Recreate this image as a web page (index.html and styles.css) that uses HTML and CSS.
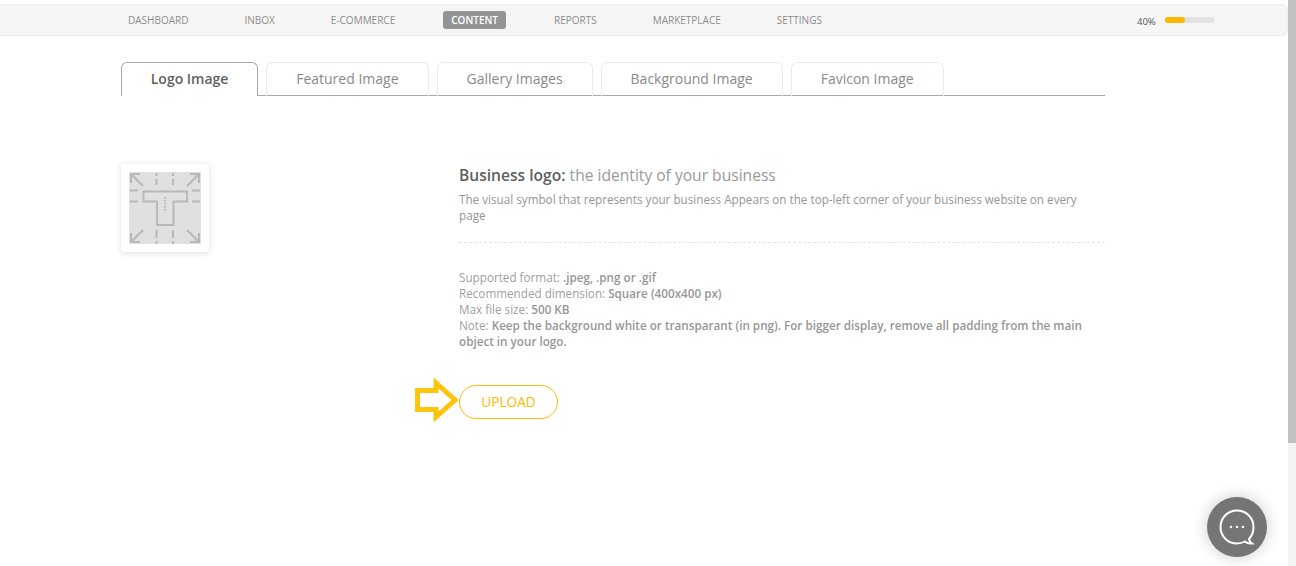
FILE: index.html
```html
<!DOCTYPE html>
<html lang="en">
  <head>
    <meta charset="UTF-8" />
    <meta name="viewport" content="width=device-width, initial-scale=1.0" />
    <title>Logo Image</title>
    <link rel="stylesheet" href="styles.css">
  </head>
  <body>
    <div class="page">
      <div class="topbar">
        <nav class="nav">
          <a class="nav-item">DASHBOARD</a>
          <a class="nav-item">INBOX</a>
          <a class="nav-item">E-COMMERCE</a>
          <a class="nav-item active">CONTENT</a>
          <a class="nav-item">REPORTS</a>
          <a class="nav-item">MARKETPLACE</a>
          <a class="nav-item">SETTINGS</a>
        </nav>
        <div class="progress">
          <span class="progress-label">40%</span>
          <div class="progress-track"><div class="progress-fill" style="width: 40%"></div></div>
        </div>
      </div>

      <div class="content">
        <div class="tabs">
          <a class="tab active">Logo Image</a>
          <a class="tab">Featured Image</a>
          <a class="tab">Gallery Images</a>
          <a class="tab">Background Image</a>
          <a class="tab">Favicon Image</a>
        </div>

        <div class="panel">
          <div class="logo-card">
            <svg class="logo-placeholder" width="72" height="72" viewBox="0 0 72 72">
              <rect width="72" height="72" fill="#e0e0e0" />
              <g fill="none" stroke="#b8b8b8" stroke-width="2">
                <path d="M14.500 19.500H58V29.500H44.500V53H28V29.500H14.500Z" />
                <path d="M2 11V2H11M2 2L14 14" />
                <path d="M70 11V2H61M70 2L58 14" />
                <path d="M2 61V70H11M2 70L14 58" />
                <path d="M70 61V70H61M70 70L58 58" />
                <path d="M1 18.500H9M1 29.500H9M63 18.500H71M63 29.500H71" />
                <path d="M27.500 1V4M27.500 7V13M44 1V4M44 7V13" />
                <path d="M27.500 58V66M27.500 69V72M44 58V66M44 69V72" />
                <path d="M36 25V40" stroke-dasharray="1.500 1.500" />
              </g>
            </svg>
          </div>

          <div class="details">
            <h2 class="details-title"><b>Business logo:</b> the identity of your business</h2>
            <p class="details-desc">The visual symbol that represents your business Appears on the top-left corner of your business website on every page</p>
            <div class="details-divider"></div>
            <p class="details-specs">
              Supported format: <b>.jpeg, .png or .gif</b><br>
              Recommended dimension: <b>Square (400x400 px)</b><br>
              Max file size: <b>500 KB</b><br>
              Note: <b>Keep the background white or transparant (in png). For bigger display, remove all padding from the main object in your logo.</b>
            </p>
            <div class="upload-row">
              <svg class="upload-arrow" width="46" height="46" viewBox="0 0 46 46">
                <path d="M2.500 12.500H21V5L40 22L21 39V31.500H2.500Z" fill="none" stroke="#fdc40d" stroke-width="5" />
              </svg>
              <button class="btn-upload">UPLOAD</button>
            </div>
          </div>
        </div>
      </div>
    </div>

    <div class="scrollbar"><div class="scrollbar-thumb"></div></div>

    <div class="chat-btn">
      <svg width="38" height="38" viewBox="0 0 38 38">
        <path d="M19 2.500C9.800 2.500 2.500 9.800 2.500 19S9.800 35.500 19 35.500C22 35.500 24.500 34.800 26.800 33.500C28.500 35 31 35.800 34 35.500C32.300 34.300 31.300 32.800 31 31C33.800 28 35.500 23.800 35.500 19C35.500 9.800 28.200 2.500 19 2.500Z" fill="none" stroke="#fff" stroke-width="2" />
        <circle cx="13" cy="19" r="1.300" fill="#fff" />
        <circle cx="19" cy="19" r="1.300" fill="#fff" />
        <circle cx="25" cy="19" r="1.300" fill="#fff" />
      </svg>
    </div>
  </body>
</html>
```

FILE: styles.css
```css
* {
  margin: 0;
  padding: 0;
  box-sizing: border-box;
}

html,
body {
  height: 100%;
  overflow: hidden;
}

body {
  font-family: "Open Sans", "Liberation Sans", sans-serif;
  background: #fff;
  color: #8f8f8f;
  display: flex;
}

.page {
  flex: 1;
  padding-top: 4px;
}

.topbar {
  height: 32px;
  background: #f6f6f6;
  border-top: 1px solid #efefef;
  border-bottom: 1px solid #e9e9e9;
  border-right: 1px solid #efefef;
  border-radius: 0 6px 6px 0;
  padding-left: 120px;
  display: flex;
  align-items: center;
}

.nav {
  display: flex;
  gap: 40px;
  width: 1017px;
}

.nav-item {
  padding: 0 8px;
  height: 18px;
  line-height: 18px;
  font-size: 10px;
  color: #8c8c8c;
  border-radius: 3px;
}

.nav-item.active {
  padding: 0 8px;
  background: #949494;
  color: #fff;
  font-weight: 600;
}

.progress {
  display: flex;
  align-items: center;
  gap: 9px;
}

.progress-label {
  font-size: 9.5px;
  color: #555;
  position: relative;
  top: 1px;
}

.progress-track {
  width: 50px;
  height: 6px;
  border-radius: 3px;
  background: #e2e2e2;
}

.progress-fill {
  height: 100%;
  border-radius: 3px;
  background: #fdb900;
}

.content {
  width: 1105px;
  padding-left: 121px;
}

.tabs {
  margin-top: 26px;
  display: flex;
  gap: 8px;
  height: 34px;
  border-bottom: 1px solid #a9a9a9;
}

.tab {
  height: 34px;
  padding: 0 29px;
  line-height: 32px;
  font-size: 14px;
  color: #8a8a8a;
  border: 1px solid #ebebeb;
  border-bottom: none;
  border-radius: 6px 6px 0 0;
}

.tab.active {
  padding: 0 28.750px;
  color: #5f5f5f;
  font-weight: 600;
  border-color: #a9a9a9;
  background: #fff;
}

.panel {
  margin-top: 68px;
  display: flex;
}

.logo-card {
  width: 88px;
  height: 88px;
  padding: 8px;
  background: #fff;
  border-radius: 3px;
  box-shadow: 0 1px 6px rgba(0, 0, 0, 0.14);
}

.logo-placeholder {
  display: block;
}

.details {
  margin-left: 250px;
  flex: 1;
}

.details-title {
  font-size: 15.600px;
  line-height: 22px;
  font-weight: 400;
  color: #9a9a9a;
}

.details-title b {
  font-weight: 600;
  color: #5f5f5f;
}

.details-desc {
  margin-top: 5px;
  font-size: 11.700px;
  line-height: 16px;
  color: #969696;
}

.details-divider {
  margin-top: 19px;
  border-top: 1px dashed #e4e4e4;
}

.details-specs {
  margin-top: 26px;
  font-size: 11.700px;
  line-height: 16px;
  color: #a0a0a0;
}

.details-specs b {
  font-weight: 600;
  color: #979797;
}

.upload-row {
  margin-top: 36px;
  display: flex;
  align-items: center;
  position: relative;
}

.upload-arrow {
  position: absolute;
  left: -44px;
  top: -7px;
}

.btn-upload {
  width: 99px;
  height: 34px;
  padding-bottom: 1px;
  background: #fff;
  border: 1px solid #fdbb0d;
  border-radius: 17px;
  font-family: inherit;
  font-size: 13.700px;
  color: #fdb900;
}

.scrollbar {
  width: 8px;
  background: #f4f4f4;
}

.scrollbar-thumb {
  height: 443px;
  background: #c1c1c1;
}

.chat-btn {
  position: fixed;
  left: 1207px;
  top: 497px;
  width: 60px;
  height: 60px;
  border-radius: 50%;
  background: #757575;
  box-shadow: 0 0 16px rgba(0, 0, 0, 0.2);
  display: flex;
  align-items: center;
  justify-content: center;
}
```
